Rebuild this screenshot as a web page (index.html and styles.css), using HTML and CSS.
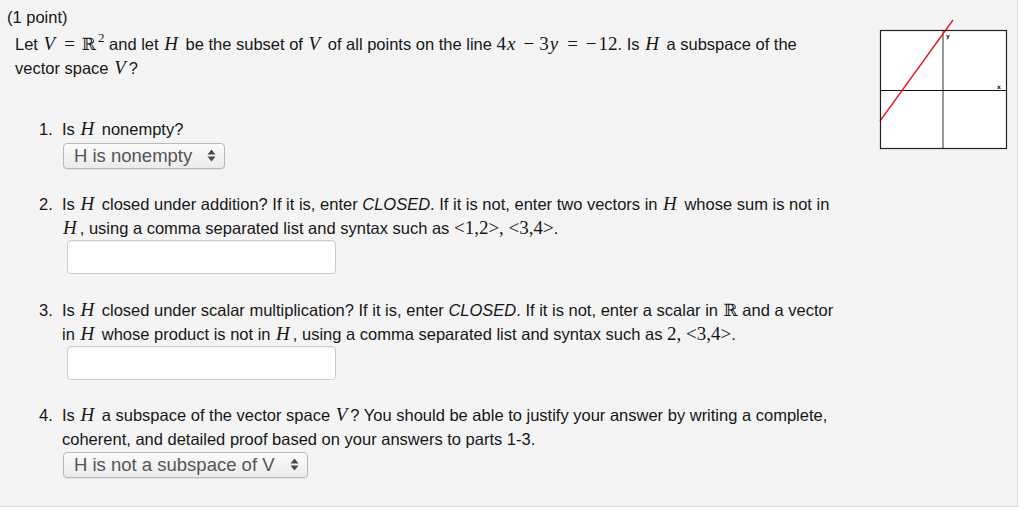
FILE: index.html
```html
<!DOCTYPE html>
<html>
<head>
<meta charset="utf-8">
<link rel="stylesheet" href="styles.css">
</head>
<body>
<div class="panel">
  <div class="main">
    <div class="points">(1 point)</div>
    <p class="problem">Let <span class="m"><i>V</i><span class="rel">=</span><span class="bb">ℝ</span><sup>2</sup></span> and let <span class="m"><i>H</i></span> be the subset of <span class="m"><i>V</i></span> of all points on the line <span class="m">4<i>x</i><span class="bin">−</span>3<i>y</i><span class="rel">=</span><span class="neg">−</span>12</span>. Is <span class="m"><i>H</i></span> a subspace of the vector space <span class="m"><i>V</i></span>?</p>
    <ol class="parts">
      <li>
        Is <span class="m"><i>H</i></span> nonempty?
        <div class="sel-wrap sel-1">
          <select class="sel"><option>H is nonempty</option></select>
          <svg class="arrows" width="9" height="13" viewBox="0 0 9 13"><path d="M4.5 0.5 L8.5 5.5 L0.5 5.5 Z M0.5 7.5 L8.5 7.5 L4.5 12.5 Z" fill="#4a4a4a"/></svg>
        </div>
      </li>
      <li>
        Is <span class="m"><i>H</i></span> closed under addition? If it is, enter <em>CLOSED</em>. If it is not, enter two vectors in <span class="m"><i>H</i></span> whose sum is not in <span class="m"><i>H</i></span>, using a comma separated list and syntax such as <span class="m">&lt;1,2&gt;, &lt;3,4&gt;</span>.
        <input class="answer" type="text">
      </li>
      <li>
        Is <span class="m"><i>H</i></span> closed under scalar multiplication? If it is, enter <em>CLOSED</em>. If it is not, enter a scalar in <span class="m"><span class="bb">ℝ</span></span> and a vector in <span class="m"><i>H</i></span> whose product is not in <span class="m"><i>H</i></span>, using a comma separated list and syntax such as <span class="m">2, &lt;3,4&gt;</span>.
        <input class="answer" type="text">
      </li>
      <li class="last">
        Is <span class="m"><i>H</i></span> a subspace of the vector space <span class="m"><i>V</i></span>? You should be able to justify your answer by writing a complete, coherent, and detailed proof based on your answers to parts 1-3.
        <div class="sel-wrap sel-4">
          <select class="sel"><option>H is not a subspace of V</option></select>
          <svg class="arrows" width="9" height="13" viewBox="0 0 9 13"><path d="M4.5 0.5 L8.5 5.5 L0.5 5.5 Z M0.5 7.5 L8.5 7.5 L4.5 12.5 Z" fill="#4a4a4a"/></svg>
        </div>
      </li>
    </ol>
  </div>
  <div class="graph">
    <svg width="127" height="119" viewBox="0 0 127 119">
      <rect x="0" y="0" width="127" height="119" fill="#fff"/>
      <line x1="63" y1="0" x2="63" y2="119" stroke="#999" stroke-width="2"/>
      <line x1="0" y1="60.5" x2="127" y2="60.5" stroke="#111" stroke-width="1"/>
      <line x1="0" y1="91" x2="73" y2="-10" stroke="#e8141a" stroke-width="1.3"/>
      <rect x="0.5" y="0.5" width="126" height="118" fill="none" stroke="#222" stroke-width="1.2"/>
      <text x="66" y="8" class="axis-label">y</text>
      <text x="117" y="59" class="axis-label">x</text>
    </svg>
  </div>
</div>
</body>
</html>
```

FILE: styles.css
```css
* { box-sizing: border-box; }

html, body {
  margin: 0;
  background: #fff;
}

body {
  font-family: "Liberation Sans", Arial, Helvetica, sans-serif;
  font-size: 16.5px;
  color: #161616;
}

.panel {
  width: 1018px;
  height: 507px;
  background: #f4f4f4;
  border-right: 1px solid #dddddd;
  border-bottom: 1px solid #dddddd;
  display: flex;
  align-items: flex-start;
  padding: 5px 0 0 7px;
}

.main {
  width: 838px;
  flex: none;
}

.points {
  line-height: 24px;
  height: 27px;
}

.problem {
  margin: 0 14px 0 8px;
  line-height: 24px;
}

.m {
  font-family: "Liberation Serif", "Times New Roman", "DejaVu Serif", serif;
  font-size: 19px;
  line-height: 1;
  white-space: nowrap;
}

.m i {
  font-style: italic;
  padding: 0 3px 0 1px;
}

.m .rel { margin: 0 6px; }
.m .bin { margin: 0 5px; }
.m .neg { margin: 0 2px; }

.m .bb {
  font-family: "DejaVu Serif", serif;
  font-size: 17px;
  margin-left: 1px;
}

.m sup {
  font-size: 13px;
  line-height: 0;
  vertical-align: 8px;
  margin-left: 2px;
}

em {
  font-style: italic;
}

.parts {
  margin: 37px 0 0 0;
  padding-left: 55px;
}

.parts li {
  line-height: 24px;
  margin-top: 23px;
}

.parts li::marker {
  content: counter(list-item) ".\00a0\00a0";
  font-size: 16.5px;
}

.parts li:first-child {
  margin-top: 0;
}

.parts li:nth-child(3) {
  margin-top: 24px;
}

.sel-wrap {
  position: relative;
  display: block;
  height: 26px;
  margin: 2px 0 0 1px;
}

.sel-1 { width: 162px; }
.sel-4 { width: 245px; margin-top: 1px; }

.sel {
  appearance: none;
  -webkit-appearance: none;
  display: block;
  width: 100%;
  height: 26px;
  padding: 0 0 0 10px;
  margin: 0;
  border: 1px solid #b9b9b9;
  border-radius: 4px;
  background: linear-gradient(#fbfbfb, #ebebeb);
  box-shadow: 0 1px 1px rgba(0, 0, 0, 0.08);
  font-family: "Liberation Sans", Arial, sans-serif;
  font-size: 18.5px;
  color: #555;
  line-height: 24px;
}

.arrows {
  position: absolute;
  right: 9px;
  top: 6px;
}

.answer {
  display: block;
  width: 269px;
  height: 34px;
  margin: 0 0 0 5px;
  background: #fff;
  border: 1px solid #cccccc;
  border-radius: 4px;
  box-shadow: inset 0 1px 1px rgba(0, 0, 0, 0.06);
  padding: 4px 8px;
  font-size: 16px;
}

.graph {
  margin: 25px 10px 0 auto;
  width: 127px;
  height: 119px;
}

.graph svg {
  display: block;
  overflow: visible;
}

.axis-label {
  font-family: "DejaVu Sans", sans-serif;
  font-size: 6px;
  font-weight: bold;
  fill: #222;
}
```
